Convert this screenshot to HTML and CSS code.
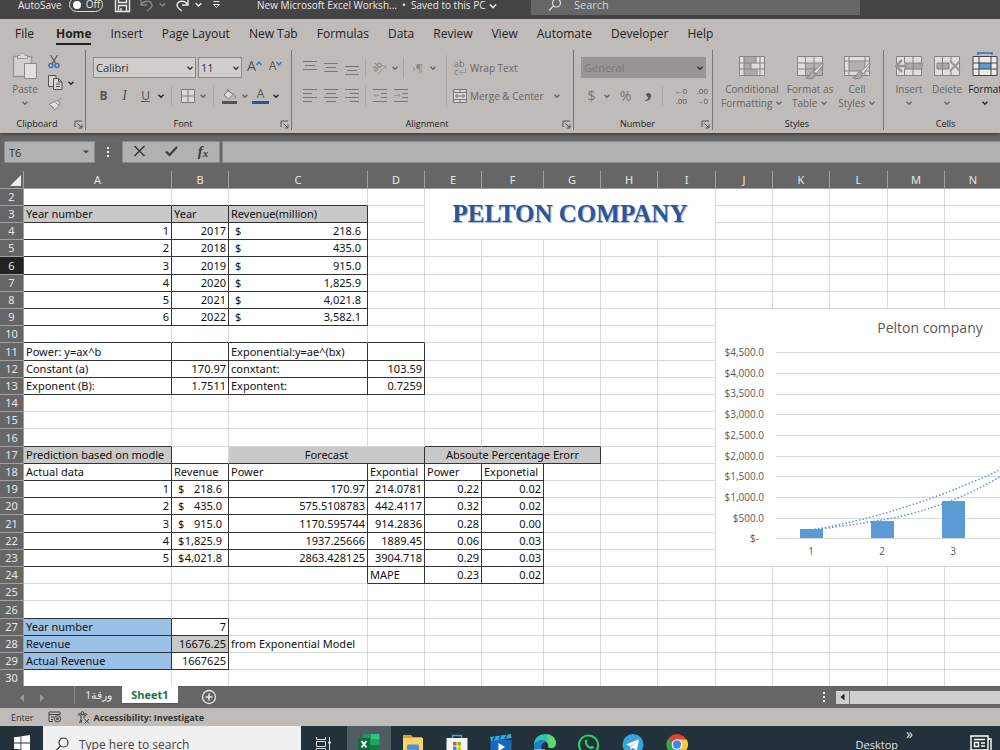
FILE: index.html
```html
<!DOCTYPE html>
<html lang="en">
<head>
  <meta charset="UTF-8">
  <meta name="viewport" content="width=device-width, initial-scale=1.0">
  <title>New Microsoft Excel Worksheet</title>
  <link rel="stylesheet" href="styles.css">
</head>
<body>
  <!-- shared icons -->
  <svg class="defs" aria-hidden="true">
    <symbol id="chev" viewBox="0 0 8 8"><path d="M1.5 2.8 4 5.3l2.5-2.5" fill="none" stroke="currentColor" stroke-width="1.3"/></symbol>
    <symbol id="launch" viewBox="0 0 9 9"><path d="M1 7V1h7M3.5 3.5 8 8M8 4.5V8H4.5" fill="none" stroke="currentColor"/></symbol>
    <symbol id="brush" viewBox="0 0 20 18"><path d="M18.5 1 10 9.5l2 2.500L19 3z" fill="#e6e4e2" stroke="#858280"/><path d="M10 10c-3-1-4 2-5 4-1 1-2 1.500-3.500 1.500 4 2.500 9 1.500 10-3z" fill="#aaa8a6" stroke="#858280"/></symbol>
  </svg>

  <div class="app">
    <header class="titlebar">
      <label class="autosave">AutoSave
        <button class="toggle" type="button"><i></i>Off</button>
      </label>
      <button class="quick" type="button" aria-label="Save"><svg width="17" height="17" viewBox="0 0 17 17" fill="none" stroke="#e8e8e8" stroke-width="1.4"><path d="M1.500 1.500h12l2 2v12h-14zM4.500 1.500v5h8v-5M4.500 15.500v-6h8v6M7 15v-3"/></svg></button>
      <button class="quick dim" type="button" aria-label="Undo"><svg width="15" height="15" viewBox="0 0 15 15" fill="none" stroke="currentColor" stroke-width="1.400"><path d="M2 2v6h6M2 8c3-5 10-5 11 0 0 2-2 4-5 6"/></svg><svg width="9" height="9"><use href="#chev"/></svg></button>
      <button class="quick" type="button" aria-label="Redo"><svg width="15" height="15" viewBox="0 0 15 15" fill="none" stroke="currentColor" stroke-width="1.400"><path d="M13 2v6H7M13 8C10 3 3 3 2 8c0 2 2 4 5 6"/></svg><svg width="9" height="9"><use href="#chev"/></svg></button>
      <button class="quick more" type="button" aria-label="Customize"><svg width="9" height="9" viewBox="0 0 9 9" fill="none" stroke="currentColor"><path d="M1.500 1.500h6M1.500 4.500l3 3 3-3z"/></svg></button>
      <button class="doc" type="button">New Microsoft Excel Worksh... &nbsp;•&nbsp; Saved to this PC <svg width="10" height="10"><use href="#chev"/></svg></button>
      <label class="search">
        <svg width="14" height="14" viewBox="0 0 14 14" fill="none" stroke="#ddd" stroke-width="1.200"><circle cx="8.500" cy="5" r="4"/><path d="M5.500 8 1 12.500"/></svg>
        <input type="text" placeholder="Search" aria-label="Search">
      </label>
    </header>

    <section class="ribbon">
      <nav class="tabs">
        <a href="#">File</a>
        <a href="#" class="active">Home</a>
        <a href="#">Insert</a>
        <a href="#">Page Layout</a>
        <a href="#">New Tab</a>
        <a href="#">Formulas</a>
        <a href="#">Data</a>
        <a href="#">Review</a>
        <a href="#">View</a>
        <a href="#">Automate</a>
        <a href="#">Developer</a>
        <a href="#">Help</a>
      </nav>

      <div class="groups">
        <div class="group clipboard">
          <div class="body">
            <button class="big paste" type="button">
              <svg width="26" height="28" viewBox="0 0 26 28"><path d="M1.500 4.500h18v20h-18z" fill="#d2d0ce" stroke="#999693" stroke-width="1.500"/><path d="M5.500 6.500V3.500H8c0-3 5-3 5 0h2.500v3z" fill="#dedcda" stroke="#999693"/><path d="M12.500 11.500h12v15h-12z" fill="#e2e0de" stroke="#8c8986"/></svg>
              <span>Paste</span>
              <svg width="8" height="8"><use href="#chev"/></svg>
            </button>
            <div class="stack">
              <button class="mini" type="button" aria-label="Cut"><svg width="12" height="15" viewBox="0 0 12 15" fill="none"><path d="M2.500 1 8 10M9.500 1 4 10" stroke="#555" stroke-width="1.200"/><circle cx="3" cy="11.500" r="2" stroke="#2f74b5" stroke-width="1.400"/><circle cx="9" cy="11.500" r="2" stroke="#2f74b5" stroke-width="1.400"/></svg></button>
              <button class="mini" type="button" aria-label="Copy"><svg width="15" height="15" viewBox="0 0 15 15" fill="#d6d4d2" stroke="#555"><path d="M5 11.500H.500V.500H8V3"/><path d="M5.500 3.500h5l3.500 3.500v7.500H5.500zM10.500 3.500V7H14M8 9h4M8 11.500h4"/></svg><svg class="dark" width="8" height="8"><use href="#chev"/></svg></button>
              <button class="mini" type="button" aria-label="Format Painter"><svg width="15" height="14" viewBox="0 0 15 14" fill="#dddbd9" stroke="#8a8784"><path d="M1 7 7 4.500l4 4-4 4.500zM7 4.500l2-1.500 3 3-1 2.500M10.500 4 13.500 1M3 9l3 2"/></svg></button>
            </div>
          </div>
          <div class="caption"><span>Clipboard</span><svg width="9" height="9"><use href="#launch"/></svg></div>
        </div>

        <div class="group font">
          <div class="body column">
            <div class="row">
              <select class="family" aria-label="Font"><option>Calibri</option></select>
              <select class="size" aria-label="Font size"><option>11</option></select>
              <button class="tool grow" type="button">A<svg width="6" height="5" viewBox="0 0 6 5"><path d="m.500 4 2.500-3 2.500 3" fill="none" stroke="#2f74b5" stroke-width="1.300"/></svg></button>
              <button class="tool shrink" type="button">A<svg width="6" height="5" viewBox="0 0 6 5"><path d="m.500 1 2.500 3 2.500-3" fill="none" stroke="#2f74b5" stroke-width="1.300"/></svg></button>
            </div>
            <div class="row">
              <button class="tool" type="button"><b>B</b></button>
              <button class="tool serif" type="button"><i>I</i></button>
              <button class="tool" type="button"><u>U</u></button>
              <button class="drop dark" type="button" aria-label="Underline style"><svg width="8" height="8"><use href="#chev"/></svg></button>
              <span class="sep"></span>
              <button class="tool" type="button" aria-label="Borders"><svg width="14" height="14" viewBox="0 0 14 14" fill="#dbd9d7" stroke="#7d7a78"><path d="M.500.500h13v13H.500zM7 .500v13M.500 7h13"/></svg></button>
              <button class="drop" type="button" aria-label="Border styles"><svg width="8" height="8"><use href="#chev"/></svg></button>
              <span class="sep"></span>
              <button class="tool" type="button" aria-label="Fill"><svg width="15" height="16" viewBox="0 0 15 16"><path d="M6 2.500 2 7l4.500 4L11 6.500zM6 4V.800M11 5.500c2 1.500 2.500 3 2 5" fill="#dedcda" stroke="#777"/><path d="M0 13h15v3H0z" fill="#555"/></svg></button>
              <button class="drop" type="button" aria-label="Fill color"><svg width="8" height="8"><use href="#chev"/></svg></button>
              <button class="tool fontcolor" type="button">A</button>
              <button class="drop dark" type="button" aria-label="Font color"><svg width="8" height="8"><use href="#chev"/></svg></button>
            </div>
          </div>
          <div class="caption"><span>Font</span><svg width="9" height="9"><use href="#launch"/></svg></div>
        </div>

        <div class="group align">
          <div class="body">
            <div class="column">
              <div class="row">
                <button class="tool" type="button" aria-label="Top"><svg width="14" height="14" viewBox="0 0 14 14"><path d="M0 .500h14M2 4.500h10M0 8.500h14" stroke="#777"/></svg></button>
                <button class="tool" type="button" aria-label="Middle"><svg width="14" height="14" viewBox="0 0 14 14"><path d="M0 2.500h14M2 6.500h10M0 10.500h14" stroke="#777"/></svg></button>
                <button class="tool" type="button" aria-label="Bottom"><svg width="14" height="14" viewBox="0 0 14 14"><path d="M0 5.500h14M2 9.500h10M0 13.500h14" stroke="#777"/></svg></button>
                <span class="sep"></span>
                <button class="tool" type="button" aria-label="Orientation"><svg width="15" height="15" viewBox="0 0 15 15"><text x="1" y="10" font-size="9" fill="#777" transform="rotate(-45 5 8)">ab</text><path d="m6 14 8-8M10.500 6H14v3.500" fill="none" stroke="#999"/></svg></button>
                <button class="drop" type="button" aria-label="Orientation options"><svg width="8" height="8"><use href="#chev"/></svg></button>
                <span class="sep"></span>
                <button class="tool pilcrow" type="button">›¶</button>
                <button class="drop" type="button" aria-label="Direction"><svg width="8" height="8"><use href="#chev"/></svg></button>
              </div>
              <div class="row">
                <button class="tool" type="button" aria-label="Left"><svg width="14" height="14" viewBox="0 0 14 14"><path d="M0 .500h14M0 4.500h9M0 8.500h14M0 12.500h9" stroke="#777"/></svg></button>
                <button class="tool" type="button" aria-label="Center"><svg width="14" height="14" viewBox="0 0 14 14"><path d="M0 .500h14M2 4.500h10M0 8.500h14M2 12.500h10" stroke="#777"/></svg></button>
                <button class="tool" type="button" aria-label="Right"><svg width="14" height="14" viewBox="0 0 14 14"><path d="M0 .500h14M5 4.500h9M0 8.500h14M5 12.500h9" stroke="#777"/></svg></button>
                <span class="sep"></span>
                <button class="tool" type="button" aria-label="Decrease indent"><svg width="14" height="14" viewBox="0 0 14 14" fill="none"><path d="M0 .500h14M8 4.500h6M8 8.500h6M0 12.500h14" stroke="#777"/><path d="M6 6.500H1M3 4.500l-2 2 2 2" stroke="#999"/></svg></button>
                <button class="tool" type="button" aria-label="Increase indent"><svg width="14" height="14" viewBox="0 0 14 14" fill="none"><path d="M0 .500h14M8 4.500h6M8 8.500h6M0 12.500h14" stroke="#777"/><path d="M0 6.500h6M4 4.500l2 2-2 2" stroke="#999"/></svg></button>
              </div>
            </div>
            <span class="sep tall"></span>
            <div class="column">
              <button class="row wide" type="button"><svg width="14" height="16" viewBox="0 0 14 16"><text x="1" y="7" font-size="9" fill="#777">ab</text><text x="1" y="15" font-size="9" fill="#777">c</text><path d="M12.500 8v4.500H7M9 10l-2.500 2.500L9 15" fill="none" stroke="#999"/></svg>Wrap Text</button>
              <button class="row wide" type="button"><svg width="14" height="14" viewBox="0 0 14 14" fill="#d9d7d5" stroke="#777"><path d="M.500.500h13v13H.500zM.500 3.500h13M.500 10.500h13M7 .500v3M7 10.500v3M2.500 7h9M4.500 5l-2 2 2 2M9.500 5l2 2-2 2"/></svg>Merge &amp; Center<svg class="far" width="8" height="8"><use href="#chev"/></svg></button>
            </div>
          </div>
          <div class="caption"><span>Alignment</span><svg width="9" height="9"><use href="#launch"/></svg></div>
        </div>

        <div class="group number">
          <div class="body column">
            <div class="row">
              <select class="format" aria-label="Number format" disabled><option>General</option></select>
            </div>
            <div class="row">
              <button class="tool sign" type="button">$</button>
              <button class="drop" type="button" aria-label="Currency"><svg width="8" height="8"><use href="#chev"/></svg></button>
              <button class="tool sign percent" type="button">%</button>
              <button class="tool comma" type="button">,</button>
              <span class="sep"></span>
              <button class="tool dec" type="button"><span>←0</span><span>.00</span></button>
              <button class="tool dec" type="button"><span>.00</span><span>→0</span></button>
            </div>
          </div>
          <div class="caption"><span>Number</span><svg width="9" height="9"><use href="#launch"/></svg></div>
        </div>

        <div class="group styles">
          <div class="body">
            <button class="big cond" type="button">
              <svg width="28" height="28" viewBox="0 0 28 28"><path d="M1.500 4.500h25v19h-25z" fill="#e0dedc" stroke="#85827f"/><path d="M6 5h12v6H6zM6 11h7v6H6zM6 17h14v6H6z" fill="#aaa8a6"/><path d="M1.500 11h25M1.500 17h25M6 4.500v19M22 4.500v19M18 5v6M13 11v6" stroke="#85827f"/></svg>
              <span>Conditional</span>
              <span>Formatting <svg width="8" height="8"><use href="#chev"/></svg></span>
            </button>
            <button class="big tablefmt" type="button">
              <svg width="28" height="28" viewBox="0 0 28 28"><path d="M1.500 4.500h25v19h-25z" fill="#e0dedc" stroke="#85827f"/><path d="M9 11h17v12H9z" fill="#b3b1af"/><path d="M1.500 11h25M1.500 17h25M9.500 4.500v19M18 4.500v19" stroke="#85827f"/><use href="#brush" x="8" y="10" width="20" height="18"/></svg>
              <span>Format as</span>
              <span>Table <svg width="8" height="8"><use href="#chev"/></svg></span>
            </button>
            <button class="big cellfmt" type="button">
              <svg width="28" height="28" viewBox="0 0 28 28"><path d="M1.500 4.500h25v19h-25z" fill="#e0dedc" stroke="#85827f"/><path d="M6 9h16v10H6z" fill="#b3b1af"/><path d="M1.500 9h25M1.500 19h25M6 4.500v19M22 4.500v19" stroke="#85827f"/><use href="#brush" x="8" y="10" width="20" height="18"/></svg>
              <span>Cell</span>
              <span>Styles <svg width="8" height="8"><use href="#chev"/></svg></span>
            </button>
          </div>
          <div class="caption"><span>Styles</span></div>
        </div>

        <div class="group cells">
          <div class="body">
            <button class="big" type="button">
              <svg width="28" height="28" viewBox="0 0 28 28"><path d="M1.500 4.500h25v19h-25z" fill="#e0dedc" stroke="#85827f"/><path d="M10 11h17v6H10z" fill="#aaa8a6" stroke="#85827f"/><path d="M9.500 4.500V11M18 4.500v19M9.500 17v6.500" stroke="#85827f"/><path d="m7 8-6 6 6 6M1 14h11" fill="none" stroke="#999693" stroke-width="2.500"/></svg>
              <span>Insert</span>
              <svg width="8" height="8"><use href="#chev"/></svg>
            </button>
            <button class="big" type="button">
              <svg width="28" height="28" viewBox="0 0 28 28"><path d="M1.500 4.500h25v19h-25z" fill="#e0dedc" stroke="#85827f"/><path d="M4 11h12v6H4z" fill="#aaa8a6" stroke="#85827f"/><path d="M9.500 4.500v19M18 4.500v5M18 18v5.500" stroke="#85827f"/><path d="m17 9 10 10M27 9 17 19" fill="none" stroke="#999693" stroke-width="2"/></svg>
              <span>Delete</span>
              <svg width="8" height="8"><use href="#chev"/></svg>
            </button>
            <button class="big enabled" type="button">
              <svg width="28" height="28" viewBox="0 0 28 28"><path d="M2 4.500h24v19H2z" fill="#eceae8" stroke="#444"/><path d="M8 11h12v6H8z" fill="#5b9bd5"/><path d="M2 11h24M2 17h24M8 4.500v19M20 4.500v19" stroke="#444"/><path d="M7 1h14M7-1v4M21-1v4" stroke="#2f74b5" stroke-width="1.500"/></svg>
              <span>Format</span>
              <svg width="8" height="8"><use href="#chev"/></svg>
            </button>
          </div>
          <div class="caption"><span>Cells</span></div>
        </div>
      </div>
    </section>

    <section class="formula">
      <select class="namebox" aria-label="Name box"><option>T6</option></select>
      <span class="dots"></span>
      <div class="entry">
        <button type="button" aria-label="Cancel"><svg width="13" height="12" viewBox="0 0 13 12"><path d="m1.500 1 10 10M11.500 1l-10 10" stroke="#3c3c3c" stroke-width="1.600"/></svg></button>
        <button type="button" aria-label="Enter"><svg width="13" height="12" viewBox="0 0 13 12"><path d="m1 6.500 3.500 3.500L12 2" fill="none" stroke="#3c3c3c" stroke-width="2.200"/></svg></button>
        <button class="fx" type="button"><i>f</i><sub>x</sub></button>
      </div>
      <input type="text" aria-label="Formula bar">
    </section>

    <main class="sheet">
      <table class="grid" id="grid"></table>

      <svg class="chart" width="428" height="259" viewBox="0 0 428 259" role="img" aria-label="Pelton company">
        <rect x="-.5" y=".5" width="428" height="258" fill="#fff" stroke="#d4d4d4"/>
        <text class="title" x="214" y="25">Pelton company</text>
        <path class="lines" d="M60 44.500h355M60 65.500h355M60 86.500h355M60 106.500h355M60 127.500h355M60 148.500h355M60 168.500h355M60 189.500h355M60 210.500h355M60 230.500h355"/>
        <g class="axis">
          <text x="48" y="48">$4,500.0</text>
          <text x="48" y="69">$4,000.0</text>
          <text x="48" y="89">$3,500.0</text>
          <text x="48" y="110">$3,000.0</text>
          <text x="48" y="131">$2,500.0</text>
          <text x="48" y="152">$2,000.0</text>
          <text x="48" y="172">$1,500.0</text>
          <text x="48" y="193">$1,000.0</text>
          <text x="48" y="214">$500.0</text>
          <text x="43" y="234">$-</text>
        </g>
        <g class="bars">
          <rect x="84" y="221" width="23" height="9"/>
          <rect x="155" y="213" width="23" height="17"/>
          <rect x="226" y="193" width="23" height="37"/>
          <rect x="297" y="155" width="23" height="75"/>
          <rect x="368" y="64" width="23" height="166"/>
        </g>
        <path class="trend" d="M95 222Q131 216 166 206T237 182 308 150 379 112"/>
        <path class="trend" d="M95 222Q131 218 166 212T237 192C263 181 285 170 308 152S355 110 379 69"/>
        <g class="cats">
          <text x="95" y="247">1</text>
          <text x="166" y="247">2</text>
          <text x="237" y="247">3</text>
          <text x="308" y="247">4</text>
          <text x="379" y="247">5</text>
        </g>
      </svg>
    </main>

    <footer class="sheets">
      <button class="nav" type="button" aria-label="Previous sheet"><svg width="6" height="8" viewBox="0 0 6 8"><path d="M5 0v8L1 4z" fill="#999"/></svg></button>
      <button class="nav" type="button" aria-label="Next sheet"><svg width="6" height="8" viewBox="0 0 6 8"><path d="M1 0v8l4-4z" fill="#999"/></svg></button>
      <a class="tab first" href="#" lang="ar" dir="rtl">ورقة1</a>
      <a class="tab current" href="#">Sheet1</a>
      <button class="add" type="button" aria-label="New sheet"><svg width="16" height="16" viewBox="0 0 16 16" fill="none" stroke="#e4e4e4"><circle cx="8" cy="8" r="6.500" stroke-width="1.300"/><path d="M8 4.500v7M4.500 8h7" stroke-width="1.600"/></svg></button>
      <span class="dots"></span>
      <div class="scroll">
        <button type="button" aria-label="Scroll left"><svg width="5" height="8" viewBox="0 0 5 8"><path d="M4.500.500v7L.500 4z" fill="#222"/></svg></button>
        <div class="track"></div>
      </div>
    </footer>

    <div class="status">
      <span class="mode">Enter</span>
      <svg width="14" height="12" viewBox="0 0 14 12" fill="none" stroke="#444"><path d="M5 10.500H1V1h11v3M1 3.500h11M3 6h3M3 8.500h2"/><circle cx="9.500" cy="7.800" r="3.200"/><circle cx="9.500" cy="7.800" r="1" fill="#444"/></svg>
      <button type="button"><svg width="13" height="13" viewBox="0 0 13 13" fill="none" stroke="#444"><circle cx="5.500" cy="2" r="1.400"/><path d="M1 3.500 4 5v3l-1.500 4M10 3.500 7 5v2.500M1 3.500l1-1L5.500 4 9 2.500l1 1M4.500 9 4 12M7.500 8l4.500 4.500M12 8l-4.500 4.500"/></svg>Accessibility: Investigate</button>
    </div>

    <div class="taskbar">
      <button class="start" type="button" aria-label="Start"><svg width="16" height="16" viewBox="0 0 16 16" fill="#fff"><path d="M0 2.300 6.500 1.400v6.200H0zM7.300 1.300 16 0v7.600H7.300zM0 8.400h6.500v6.200L0 13.700zM7.300 8.400H16V16l-8.700-1.300z"/></svg></button>
      <label class="find">
        <svg width="14" height="15" viewBox="0 0 14 15" fill="none" stroke="#333" stroke-width="1.200"><circle cx="8.500" cy="5.500" r="4.500"/><path d="M5.500 9 1 13.500"/></svg>
        <input type="text" placeholder="Type here to search" aria-label="Type here to search">
      </label>
      <button class="task view" type="button" aria-label="Task view"><svg width="16" height="14" viewBox="0 0 16 14" fill="none" stroke="#ddd"><path d="M.500 0v2.500h9V0M.500 4.500h9v5h-9zM.500 14v-2.500h9V14M13.500 0v14"/><circle cx="13.500" cy="5.500" r="1" fill="#fff"/></svg></button>
      <button class="task open" type="button" aria-label="Excel"><svg width="22" height="20" viewBox="0 0 22 20"><path d="M5 1.500A1.500 1.500 0 0 1 6.500 0H13v20H5z" fill="#1f9a5c"/><path d="M13 0h7a1.500 1.500 0 0 1 1.500 1.500V5H13z" fill="#33c481"/><path d="M13 5h8.500v6H13z" fill="#21a366"/><path d="M5 11h16.500v9H5z" fill="#107c41"/><rect y="4" width="12" height="12" rx="1" fill="#0f6b39"/><path d="m3.500 7 5 6.500M8.500 7l-5 6.500" stroke="#fff" stroke-width="1.800"/></svg></button>
      <button class="task" type="button" aria-label="File Explorer"><svg width="22" height="18" viewBox="0 0 22 18"><path d="M1 0h8l2 2h9v5H1z" fill="#e0a02c"/><path d="M1 3h20v15H1z" fill="#fbd36b"/><path d="M5 18v-7a1.500 1.500 0 0 1 1.500-1.500h9A1.500 1.500 0 0 1 17 11v7h-3v-3H8v3z" fill="#4b93cf"/></svg></button>
      <button class="task" type="button" aria-label="Store"><svg width="22" height="20" viewBox="0 0 22 20"><path d="M6.500 5V1.500h9V5" fill="none" stroke="#3aa5dc" stroke-width="1.500"/><path d="M.500 4h21v16H.500z" fill="#f4f4f4"/><path d="M7 8h3.500v3.500H7z" fill="#f25022"/><path d="M11.500 8H15v3.500h-3.500z" fill="#7fba00"/><path d="M7 12.500h3.500V16H7z" fill="#00a4ef"/><path d="M11.500 12.500H15V16h-3.500z" fill="#ffb900"/></svg></button>
      <button class="task" type="button" aria-label="Movies"><svg width="22" height="20" viewBox="0 0 22 20"><path d="M.500 6h21v14H.500z" fill="#1769c0"/><path d="M0 3 21 0l.500 4L1 7z" fill="#35aee6"/><path d="m5 2.300-2 4M11 1.500l-2 4M17 .600l-2 4" stroke="#0d4d94" stroke-width="1.500"/><path d="m8.500 9 6.500 4-6.500 4z" fill="#fff"/></svg></button>
      <button class="task" type="button" aria-label="Edge"><svg width="22" height="20" viewBox="0 0 22 20"><path d="M0 11C0 4 5 0 11 0c7 0 11 5 11 9 0 3-2 5-5 5-4 0-2-2-3-4-2-4-10-4-14 1z" fill="#35c1b0"/><path d="M13 .200C19 1 22 5 22 9c0 3-2 5-5 5-4 0-2-2-3-4z" fill="#5fd86c"/><path d="M0 11c3-6 10-6 13-3-6-1-7 6-4 12H4C1 18 0 15 0 11z" fill="#1b7fd4"/><path d="M0 15h11v5H0z" fill="#f0902a"/></svg></button>
      <button class="task" type="button" aria-label="WhatsApp"><svg width="22" height="20" viewBox="0 0 22 20"><path d="m1 21 1.500-5a9.500 9.500 0 1 1 3 3z" fill="none" stroke="#25d366" stroke-width="2"/><path d="M7 6.500c1-1.500 2-1 2.300.500.300 1-.800 1.500-.300 2.500s2 2.500 3 3 1.500-1 2.500-.500 2 1.200 1 2.300c-3 3-10-3-8.500-7.800z" fill="#25d366"/></svg></button>
      <button class="task" type="button" aria-label="Telegram"><svg width="22" height="21" viewBox="0 0 22 21"><circle cx="11" cy="10.500" r="10.500" fill="#34a5de"/><path d="m4 10.500 13-5.300-2.200 11.500-4-3-2 2-.500-3.500z" fill="#fff"/><path d="M8.500 12 15 7l-5.500 6z" fill="#a9cfe8"/></svg></button>
      <button class="task" type="button" aria-label="Chrome"><svg width="22" height="21" viewBox="0 0 22 21"><circle cx="11" cy="10.500" r="10.500" fill="#e04234"/><path d="M11 10.500 2 5.100A10.500 10.500 0 0 0 11 21l5-8z" fill="#2da94f"/><path d="M11 5.500h9.700A10.500 10.500 0 0 1 11 21l4.500-8z" fill="#fcc934"/><circle cx="11" cy="10.500" r="5.300" fill="#fff"/><circle cx="11" cy="10.500" r="4.200" fill="#4284f3"/></svg></button>
      <div class="tray">
        <span>Desktop</span>
        <button class="expand" type="button">»</button>
        <button type="button" aria-label="News"><svg width="22" height="16" viewBox="0 0 22 16" fill="none" stroke="#fff" stroke-width="1.400"><path d="M1 15V1h17v14zM18 4h3v11M4 4.500h11M11 8h4M11 11h4M4.500 7.500h4v4h-4z"/></svg></button>
      </div>
    </div>
  </div>

  <script src="script.js"></script>
</body>
</html>
```

FILE: styles.css
```css
* {
  box-sizing: border-box;
}
body {
  margin: 0;
  height: 100vh;
  overflow: hidden;
  font-family: "Open Sans", "Noto Sans", sans-serif;
  font-size: 11px;
  color: #222;
  background: #666;
}
button, input, select {
  font: inherit;
  color: inherit;
  border: 0;
  padding: 0;
  background: none;
}
a {
  color: inherit;
  text-decoration: none;
}
svg {
  flex: none;
}
.defs {
  display: none;
}
/* window is a little taller than the viewport on both ends */
.app {
  display: flex;
  flex-direction: column;
  height: calc(100vh + 22px);
  margin-top: -10px;
}

/* title bar */
.titlebar {
  display: flex;
  align-items: center;
  flex: none;
  height: 29px;
  padding-left: 18px;
  background: #444;
  color: #e8e8e8;
  font-size: 10px;
}
.autosave {
  display: flex;
  align-items: center;
  gap: 7px;
  width: 96px;
  white-space: nowrap;
}
.toggle {
  display: flex;
  align-items: center;
  gap: 5px;
  width: 34px;
  height: 15px;
  padding-left: 3px;
  border: 1px solid #ddd;
  border-radius: 8px;
  line-height: 13px;
}
.toggle i {
  flex: none;
  width: 8px;
  height: 8px;
  border-radius: 50%;
  background: #fff;
}
.quick {
  display: flex;
  align-items: center;
  gap: 4px;
  margin-right: 8px;
}
.quick.dim {
  color: #888;
}
.quick.more {
  margin: 0 36px 0 1px;
}
.doc {
  flex: none;
  width: 274px;
  text-align: left;
  white-space: nowrap;
}
.doc svg {
  vertical-align: middle;
}
.search {
  display: flex;
  align-items: center;
  gap: 12px;
  flex: 0 1 329px;
  height: 21px;
  padding-left: 17px;
  background: #666;
  font-size: 11px;
}
.search input {
  width: 100%;
}
.search input::placeholder {
  color: #d4d4d4;
}

/* ribbon */
.ribbon {
  flex: none;
  height: 114px;
  background: #bfbbb8;
  box-shadow: 0 1px 3px #333;
  z-index: 1;
}
.tabs {
  display: flex;
  gap: 19px;
  height: 31px;
  padding: 4px 15px 0;
  font-size: 12px;
  line-height: 21px;
}
.tabs a {
  height: 22px;
  white-space: nowrap;
}
.tabs .active {
  margin-left: 3px;
  font-weight: 700;
  border-bottom: 2px solid #222;
}
.groups {
  display: flex;
  height: 80px;
  overflow: hidden;
  color: #666;
  font-size: 10px;
}
.group {
  display: flex;
  flex-direction: column;
  flex: none;
  border-right: 1px solid #777;
}
.body {
  display: flex;
  height: 68px;
}
.caption {
  display: flex;
  align-items: center;
  height: 12px;
  padding-right: 2px;
  font-size: 9px;
  line-height: 12px;
  color: #222;
}
.caption span {
  flex: 1;
  text-align: center;
}
.caption svg {
  color: #555;
}
.column {
  display: flex;
  flex-direction: column;
  gap: 7px;
  padding-top: 7px;
}
.row {
  display: flex;
  align-items: center;
  height: 21px;
}
.tool {
  display: flex;
  align-items: center;
  justify-content: center;
  width: 21px;
  height: 21px;
  font-size: 12px;
  color: #555;
}
.drop {
  display: flex;
  justify-content: center;
  width: 10px;
}
.dark, .enabled {
  color: #222;
}
.sep {
  width: 1px;
  height: 20px;
  margin: 0 3px;
  background: #aaa6a3;
}
.sep.tall {
  height: 52px;
  margin: 5px 6px 0 8px;
}
.clipboard {
  width: 86px;
}
.font {
  width: 206px;
}
.align {
  width: 282px;
}
.number {
  width: 139px;
}
.styles {
  width: 171px;
}
.cells {
  width: 126px;
}
.big {
  display: flex;
  flex-direction: column;
  align-items: center;
  width: 38px;
  padding-top: 2px;
  line-height: 14px;
  white-space: nowrap;
}
.big > svg + span {
  margin-top: 2px;
}
.big > span + svg {
  margin-top: 3px;
}
.paste {
  width: 50px;
}
.cond {
  width: 64px;
}
.tablefmt {
  width: 52px;
}
.cellfmt {
  width: 42px;
}
.stack {
  display: flex;
  flex-direction: column;
  gap: 6px;
  padding-top: 4px;
}
.clipboard .stack {
  margin-left: -2px;
}
.mini {
  display: flex;
  align-items: center;
  gap: 4px;
  height: 15px;
}
.font .body, .number .body {
  padding-left: 7px;
}
.font .sep {
  margin: 0 5px;
}
select {
  appearance: none;
  padding: 0 2px;
  font-size: 11px;
  color: #333;
  border: 1px solid #8c8987;
  background: #cfcecd url("data:image/svg+xml,%3Csvg xmlns='http://www.w3.org/2000/svg' width='8' height='8'%3E%3Cpath d='M1.500 2.800 4 5.300l2.500-2.500' fill='none' stroke='%23333' stroke-width='1.300'/%3E%3C/svg%3E") no-repeat right 1px center;
}
.family {
  width: 103px;
  height: 21px;
  margin-right: 2px;
}
.size {
  width: 44px;
  height: 21px;
}
.format {
  width: 125px;
  height: 21px;
  color: #777;
  opacity: 1;
  border-color: #989694;
  background-color: #989694;
}
.grow, .shrink {
  align-items: flex-start;
  color: #555;
  line-height: 17px;
}
.grow {
  margin-left: 2px;
  font-size: 14px;
}
.shrink {
  font-size: 12px;
}
.grow svg, .shrink svg {
  margin-top: 4px;
}
.serif {
  font-family: "Liberation Serif", serif;
  font-size: 14px;
}
.fontcolor {
  width: 17px;
  height: 16px;
  margin: 0 2px;
  line-height: 12px;
  border-bottom: 3px solid #2f5597;
}
.align .body {
  padding-left: 7px;
}
.pilcrow {
  color: #888;
  font-size: 11px;
}
.wide {
  gap: 3px;
}
.wide .far {
  margin-left: 6px;
}
.sign {
  font-size: 14px;
  color: #777;
}
.percent {
  margin: 0 2px 0 3px;
}
.comma {
  padding-bottom: 16px;
  font-family: "Liberation Serif", serif;
  font-size: 28px;
  font-weight: 700;
  line-height: 10px;
}
.dec {
  flex-direction: column;
  align-items: flex-end;
  font-size: 8px;
  line-height: 10px;
}
.styles .body {
  padding-left: 7px;
}
.cells .body {
  padding-left: 6px;
}

/* formula bar */
.formula {
  display: flex;
  align-items: center;
  flex: none;
  height: 38px;
  padding-left: 4px;
  background: #666;
}
.formula select, .formula input, .entry {
  height: 22px;
  border: 1px solid #8a8a8a;
  background-color: #b1b1b1;
}
.formula select {
  width: 91px;
  padding-left: 4px;
  background-image: url("data:image/svg+xml,%3Csvg xmlns='http://www.w3.org/2000/svg' width='8' height='8'%3E%3Cpath d='M1 2.500h6L4 5.500z' fill='%23444'/%3E%3C/svg%3E");
  background-position: right 4px center;
}
.formula input {
  flex: 1;
  margin-left: 2px;
  border-right: 0;
}
.dots {
  width: 2px;
  height: 10px;
  background: repeating-linear-gradient(#eee 0 2px, transparent 2px 4px);
}
.formula .dots {
  margin: 0 13px 0 12px;
}
.entry {
  display: flex;
  align-items: center;
  width: 98px;
}
.entry button {
  flex: 1;
}
.fx {
  font-family: "Liberation Serif", serif;
  font-size: 15px;
  line-height: 18px;
  font-weight: 700;
  color: #3c3c3c;
}
.fx sub {
  font-size: 11px;
  font-style: italic;
  vertical-align: -1px;
}

/* sheet */
.sheet {
  position: relative;
  flex: 1;
  min-height: 0;
  overflow: hidden;
  background: #fff;
}
.grid {
  table-layout: fixed;
  width: 0;
  border-spacing: 0;
  font-family: "Noto Sans", "Open Sans", sans-serif;
  line-height: 14px;
}
.grid tr {
  height: 17px;
}
.grid thead tr, .grid tbody tr:nth-child(5n) {
  height: 18px;
}
.grid td {
  padding: 0 2px;
  border: solid #d9d9d9;
  border-width: 0 1px 1px 0;
  color: #111;
  white-space: nowrap;
}
.grid th {
  padding: 0;
  border: solid #a0a0a0;
  border-width: 0 1px 1px 0;
  background: #666;
  color: #e6e6e6;
  font-weight: 400;
}
.grid th.here {
  background: #222;
  border-right-color: #217346;
}
.grid .num {
  text-align: right;
}
.grid .mid {
  text-align: center;
}
.grid .money {
  padding: 0 6px;
}
.money div {
  display: flex;
  justify-content: space-between;
}
.grid .gray {
  background: #c9c9c9;
}
.grid .blue {
  background: #9bc2e6;
}
.grid .line-r {
  border-right-color: #333;
}
.grid .line-b {
  border-bottom-color: #333;
}
.corner svg {
  display: block;
  margin: 2px 2px 0 auto;
}
.grid .wordart {
  text-align: center;
  font-family: "Liberation Serif", serif;
  font-size: 25px;
  line-height: 24px;
  font-weight: 700;
  color: #2f5597;
  text-shadow: 1px 1px 0 #a9bbdc;
}
.chart {
  position: absolute;
  left: 716px;
  top: 137px;
  fill: #595959;
  font-size: 10px;
}
.chart .title {
  font-size: 14px;
  text-anchor: middle;
}
.chart .lines {
  stroke: #d9d9d9;
}
.chart .axis {
  text-anchor: end;
}
.chart .cats {
  text-anchor: middle;
}
.chart .bars {
  fill: #5b9bd5;
}
.chart .trend {
  fill: none;
  stroke: #5b9bd5;
  stroke-width: 1.5;
  stroke-dasharray: 1.5 2;
}

/* sheet tabs */
.sheets {
  display: flex;
  align-items: center;
  flex: none;
  height: 22px;
  padding-left: 12px;
  background: #666;
  color: #e6e6e6;
}
.nav {
  width: 20px;
}
.tab {
  height: 18px;
  align-self: flex-start;
  line-height: 17px;
}
.tab.first {
  margin-left: 22px;
  padding: 0 10px;
  border-left: 1px solid #888;
}
.tab.current {
  padding: 0 9px;
  background: #fff;
  color: #217346;
  font-weight: 700;
  border-bottom: 1px solid #217346;
}
.add {
  margin: 0 auto 0 23px;
  height: 16px;
}
.scroll {
  display: flex;
  width: 164px;
  height: 13px;
  margin-left: 11px;
  background: #cfcfcf;
}
.scroll button {
  display: flex;
  align-items: center;
  justify-content: center;
  width: 14px;
  border-right: 1px solid #777;
}
.track {
  flex: 1;
}

/* status bar */
.status {
  display: flex;
  align-items: center;
  flex: none;
  height: 18px;
  padding-left: 11px;
  gap: 15px;
  background: #bfbbb8;
  font-size: 9px;
  color: #333;
}
.status button {
  display: flex;
  align-items: center;
  gap: 3px;
  font-weight: 700;
}

/* taskbar */
.taskbar {
  display: flex;
  flex: none;
  height: 36px;
  background: #23313a;
  color: #e4e4e4;
}
.start {
  width: 43px;
}
.find {
  display: flex;
  align-items: center;
  gap: 10px;
  flex: 0 1 258px;
  padding-left: 12px;
  background: #f0f0f0;
  font-size: 12px;
}
.find input {
  width: 100%;
}
.find input::placeholder {
  color: #444;
}
.task {
  display: flex;
  align-items: center;
  justify-content: center;
  width: 44px;
}
.task.view {
  width: 46px;
}
.task.open {
  background: #4f5c61;
}
.tray {
  display: flex;
  align-items: center;
  gap: 8px;
  margin-left: auto;
  padding-right: 8px;
}
.expand {
  align-self: flex-start;
  margin-right: 49px;
  font-size: 14px;
  line-height: 16px;
}
```

FILE: script.js
```js
const cols = { A: 148, B: 57, C: 139, D: 57, E: 57, F: 62, G: 57, H: 57, I: 58, J: 57, K: 57, L: 58, M: 57, N: 57, O: 57, P: 57, Q: 57, R: 57 };
const letters = Object.keys(cols);
const firstRow = 2, lastRow = 30;

// text starting with "$" is split into sign and amount
const data = {
  E2: "PELTON COMPANY",
  A3: "Year number", B3: "Year", C3: "Revenue(million)",
  A4: 1, B4: 2017, C4: "$218.6",
  A5: 2, B5: 2018, C5: "$435.0",
  A6: 3, B6: 2019, C6: "$915.0",
  A7: 4, B7: 2020, C7: "$1,825.9",
  A8: 5, B8: 2021, C8: "$4,021.8",
  A9: 6, B9: 2022, C9: "$3,582.1",
  A11: "Power: y=ax^b", C11: "Exponential:y=ae^(bx)",
  A12: "Constant (a)", B12: 170.97, C12: "conxtant:", D12: 103.59,
  A13: "Exponent (B):", B13: 1.7511, C13: "Expontent:", D13: 0.7259,
  A17: "Prediction based on modle", C17: "Forecast", E17: "Absoute Percentage Erorr",
  A18: "Actual data", B18: "Revenue", C18: "Power", D18: "Expontial", E18: "Power", F18: "Exponetial",
  A19: 1, B19: "$218.6", C19: 170.97, D19: 214.0781, E19: "0.22", F19: "0.02",
  A20: 2, B20: "$435.0", C20: 575.5108783, D20: 442.4117, E20: "0.32", F20: "0.02",
  A21: 3, B21: "$915.0", C21: 1170.595744, D21: 914.2836, E21: "0.28", F21: "0.00",
  A22: 4, B22: "$1,825.9", C22: 1937.25666, D22: 1889.45, E22: "0.06", F22: "0.03",
  A23: 5, B23: "$4,021.8", C23: 2863.428125, D23: 3904.718, E23: "0.29", F23: "0.03",
  D24: "MAPE", E24: "0.23", F24: "0.02",
  A27: "Year number", B27: 7,
  A28: "Revenue", B28: 16676.25, C28: "from Exponential Model",
  A29: "Actual Revenue", B29: 1667625
};
const merges = { E2: [5, 3], C17: [2, 1], E17: [3, 1] };
const extra = { E2: "wordart", C17: "mid", E17: "mid" };
const fills = { gray: ["A3:C3", "A17:A17", "C17:G17", "B28:B28"], blue: ["A27:A29"] };
const boxes = ["A3:C9", "A11:D13", "A17:A17", "E17:G17", "A18:F23", "D24:F24", "A27:B29"];

function inRange(c, r, range) {
  const [, c1, r1, c2, r2] = range.match(/([A-Z])(\d+):([A-Z])(\d+)/);
  return c >= c1 && c <= c2 && r >= +r1 && r <= +r2;
}
function boxed(c, r) {
  return boxes.some(b => inRange(c, r, b));
}

const covered = new Set();
const table = document.getElementById("grid");

let html = `<colgroup><col style="width:24px">`;
letters.forEach(c => html += `<col style="width:${cols[c]}px">`);
html += `</colgroup><thead><tr><th class="corner"><svg width="11" height="11"><path d="M11 0v11H0z" fill="#eee"/></svg></th>`;
letters.forEach(c => html += `<th>${c}</th>`);
html += `</tr></thead><tbody>`;

for (let r = firstRow; r <= lastRow; r++) {
  html += `<tr><th${r === 6 ? ' class="here"' : ""}>${r}</th>`;
  letters.forEach((c, i) => {
    const id = c + r;
    if (covered.has(id)) return;

    const [w, h] = merges[id] || [1, 1];
    for (let y = 0; y < h; y++)
      for (let x = 0; x < w; x++) covered.add(letters[i + x] + (r + y));

    const cls = [];
    const last = letters[i + w - 1], next = letters[i + w];
    if (boxed(last, r) || boxed(next, r)) cls.push("line-r");
    if (boxed(c, r) || boxed(c, r + h)) cls.push("line-b");
    for (const f in fills) if (fills[f].some(b => inRange(c, r, b))) cls.push(f);
    if (extra[id]) cls.push(extra[id]);

    let text = data[id] === undefined ? "" : String(data[id]);
    if (text[0] === "$") {
      cls.push("money");
      text = `<div><span>$</span><span>${text.slice(1)}</span></div>`;
    } else if (text !== "" && !isNaN(text)) {
      cls.push("num");
    }
    html += `<td class="${cls.join(" ")}" colspan="${w}" rowspan="${h}">${text}</td>`;
  });
  html += `</tr>`;
}
table.innerHTML = html + `</tbody>`;
```
